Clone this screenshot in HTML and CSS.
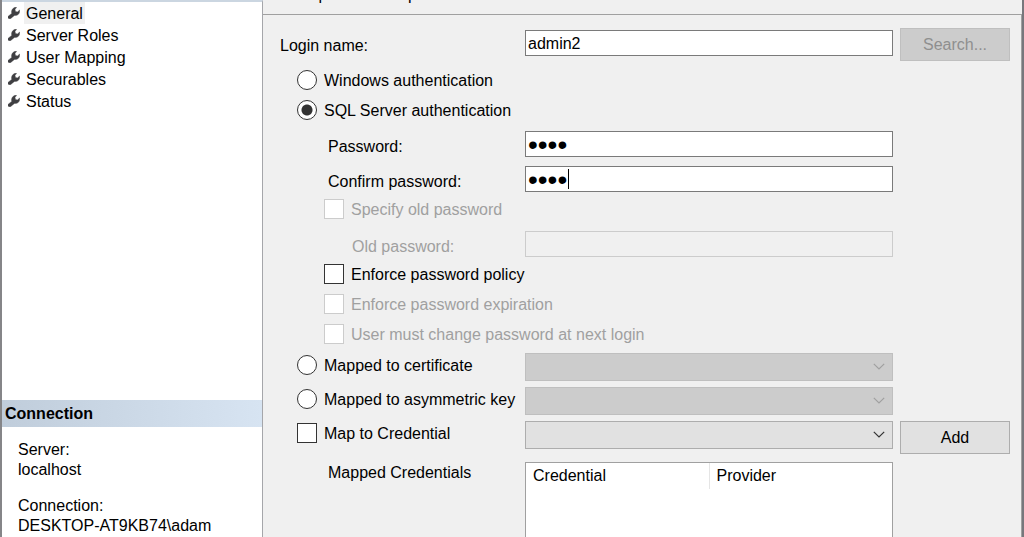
FILE: index.html
```html
<!DOCTYPE html>
<html lang="en">
<head>
<meta charset="utf-8">
<title>Login Properties</title>
<link rel="stylesheet" href="styles.css">
</head>
<body>
<svg class="defs" aria-hidden="true">
  <symbol id="wrench" viewBox="0 0 12 12">
    <path d="M0.2 9.2 L3.7 6.4 C3 3 5 0.2 8.6 0.2 L7 2.6 L7.5 4.4 L9.4 4.9 L11.7 3 C12 6.6 9.8 8.8 6.4 8.5 L2.8 11.4 C1 12.4 -0.8 10.8 0.2 9.2Z" fill="#3f3f42" stroke="#3f3f42" stroke-width="0.4"/>
  </symbol>
  <symbol id="chevron" viewBox="0 0 12 7">
    <path d="M0.8 0.8 L6 6 L11.2 0.8" fill="none" stroke="currentColor" stroke-width="1.2"/>
  </symbol>
</svg>
<div class="window">
  <aside class="sidebar">
    <nav class="pages">
      <a class="page" href="#general"><svg class="page-icon"><use href="#wrench"/></svg><span class="page-name page-name--current">General</span></a>
      <a class="page" href="#roles"><svg class="page-icon"><use href="#wrench"/></svg><span class="page-name">Server Roles</span></a>
      <a class="page" href="#mapping"><svg class="page-icon"><use href="#wrench"/></svg><span class="page-name">User Mapping</span></a>
      <a class="page" href="#securables"><svg class="page-icon"><use href="#wrench"/></svg><span class="page-name">Securables</span></a>
      <a class="page" href="#status"><svg class="page-icon"><use href="#wrench"/></svg><span class="page-name">Status</span></a>
    </nav>
    <section class="connection">
      <h2 class="connection-title">Connection</h2>
      <dl class="connection-info">
        <div><dt>Server:</dt><dd>localhost</dd></div>
        <div><dt>Connection:</dt><dd>DESKTOP-AT9KB74\adam</dd></div>
      </dl>
    </section>
  </aside>
  <main class="main">
    <div class="toolbar"><a class="tool" href="#script">Script</a><a class="tool" href="#help">Help</a></div>
    <form class="form">
      <div class="row row--text">
        <label class="label" for="login">Login name:</label>
        <input class="input" id="login" type="text" value="admin2">
        <button class="button" type="button" disabled>Search...</button>
      </div>
      <div class="group group--auth">
        <label class="option"><input class="radio" type="radio" name="auth">Windows authentication</label>
        <label class="option"><input class="radio" type="radio" name="auth" checked>SQL Server authentication</label>
      </div>
      <div class="row row--text">
        <label class="label label--nested" for="pw">Password:</label>
        <input class="input input--secret" id="pw" type="password" value="1234">
      </div>
      <div class="row row--text">
        <label class="label label--nested" for="pw2">Confirm password:</label>
        <div class="field">
          <input class="input input--secret" id="pw2" type="password" value="1234">
          <span class="caret"></span>
        </div>
      </div>
      <div class="group group--old">
        <label class="option option--nested option--off"><input class="check" type="checkbox" disabled>Specify old password</label>
      </div>
      <div class="row row--text">
        <label class="label label--deep" for="oldpw">Old password:</label>
        <input class="input" id="oldpw" type="password" disabled>
      </div>
      <div class="group group--policy">
        <label class="option option--nested"><input class="check" type="checkbox">Enforce password policy</label>
        <label class="option option--nested option--off"><input class="check" type="checkbox" disabled>Enforce password expiration</label>
        <label class="option option--nested option--off"><input class="check" type="checkbox" disabled>User must change password at next login</label>
      </div>
      <div class="group group--mapped">
        <div class="row">
          <label class="option"><input class="radio" type="radio" name="auth">Mapped to certificate</label>
          <div class="field"><select class="select" aria-label="Certificate" disabled></select><svg class="chevron chevron--off"><use href="#chevron"/></svg></div>
        </div>
        <div class="row">
          <label class="option"><input class="radio" type="radio" name="auth">Mapped to asymmetric key</label>
          <div class="field"><select class="select" aria-label="Asymmetric key" disabled></select><svg class="chevron chevron--off"><use href="#chevron"/></svg></div>
        </div>
        <div class="row">
          <label class="option"><input class="check" type="checkbox">Map to Credential</label>
          <div class="field"><select class="select" aria-label="Credential"></select><svg class="chevron"><use href="#chevron"/></svg></div>
          <button class="button" type="button">Add</button>
        </div>
      </div>
      <div class="row row--list">
        <span class="label label--nested" id="creds">Mapped Credentials</span>
        <div class="list">
          <table class="table" aria-labelledby="creds">
            <thead><tr><th>Credential</th><th>Provider</th></tr></thead>
          </table>
        </div>
      </div>
    </form>
  </main>
</div>
</body>
</html>
```
FILE: styles.css
```css
* { box-sizing: border-box; }

body {
  margin: 0;
  background: #f0f0f0;
  color: #000;
  font: 16px/21px "Liberation Sans", Arial, sans-serif;
}

.defs { position: absolute; width: 0; height: 0; }

.window {
  display: flex;
  height: 100vh;
  overflow: hidden;
  border-left: 2px solid #858588;
  border-right: 2px solid #77777c;
}

/* Sidebar */
.sidebar {
  display: flex;
  flex-direction: column;
  flex: 0 0 261px;
  background: #fff;
  border-top: 2px solid #cbd6e1;
  border-right: 1px solid #a5a6aa;
}

.pages { flex: 1; }

.page {
  display: flex;
  align-items: center;
  gap: 4px;
  height: 22px;
  padding-left: 6px;
  color: #000;
  text-decoration: none;
}

.page-icon { width: 12px; height: 12px; }

.page-name { padding: 1px 2px 0; }
.page-name--current { background: #f0f0f0; }

.connection-title {
  margin: 0;
  padding: 3px;
  font-size: 16px;
  line-height: 21px;
  background: linear-gradient(90deg, #c0cddb, #d7e4f2);
}

.connection-info {
  display: flex;
  flex-direction: column;
  gap: 16px;
  margin: 0;
  padding: 13px 16px 1px;
  line-height: 20px;
}

.connection-info dd { margin: 0; }

/* Main panel */
.main {
  display: flex;
  flex-direction: column;
  flex: 1;
  min-width: 0;
}

.toolbar {
  display: flex;
  align-items: flex-end;
  gap: 52px;
  height: 14px;
  padding: 0 28px 9px;
  overflow: hidden;
}

.tool { color: #000; text-decoration: none; }

.form {
  display: flex;
  flex-direction: column;
  flex: 1;
  min-height: 0;
  padding: 12px 11px 0 17px;
  border-top: 1px solid #a0a0a0;
  border-right: 1px solid #a0a0a0;
}

.row {
  display: grid;
  grid-template-columns: 245px minmax(0, 1fr) 110px;
  align-items: center;
}

.row--text { padding: 3px 0 5px; }
.group + .row--text { padding-top: 4px; }
.row--text + .row--text { padding-top: 4px; }

.label { padding-top: 5px; }
.label--nested { padding-left: 48px; }
.label--deep { padding-left: 72px; color: #a0a0a0; }

.input {
  width: 100%;
  height: 26px;
  padding: 2px 2px 0;
  border: 1px solid #7a7a7a;
  border-radius: 0;
  background: #fff;
  color: #000;
  font: inherit;
  outline: none;
}

.row .input,
.field { width: calc(100% - 7px); }
.field .input { width: 100%; }

.input--secret { font-size: 28px; }

.input:disabled {
  border-color: #ccc;
  background: #f0f0f0;
}

.field { position: relative; display: flex; }

.caret {
  position: absolute;
  top: 3px;
  left: 43px;
  width: 1px;
  height: 20px;
  background: #000;
}

.button {
  align-self: end;
  height: 33px;
  margin: -2px 0 -5px;
  padding: 0;
  border: 1px solid #adadad;
  border-radius: 0;
  background: #e1e1e1;
  color: #000;
  font: inherit;
}

.button:disabled {
  border-color: #bfbfbf;
  background: #ccc;
  color: #8f8f8f;
}

.group { display: flex; flex-direction: column; gap: 6px; }
.group--auth { padding: 7px 0 5px; }
.group--old { padding-bottom: 6px; }
.group--mapped { padding: 7px 0 13px; }

.option {
  display: flex;
  align-items: center;
  gap: 7px;
  height: 24px;
  padding-left: 17px;
}

.row .option { margin-bottom: 4px; }
.option--nested { padding-left: 44px; }
.option--off { color: #a0a0a0; }

.radio,
.check {
  appearance: none;
  flex: none;
  width: 20px;
  height: 20px;
  margin: 0;
  border: 1px solid #333;
  background: #fff;
}

.radio { border-radius: 50%; }
.radio:checked { background: radial-gradient(circle, #333 5px, #fff 6px); }
.check:disabled { border-color: #ccc; }

.select {
  appearance: none;
  width: 100%;
  height: 28px;
  border: 1px solid #adadad;
  border-radius: 0;
  background: #e1e1e1;
  font: inherit;
}

.select:disabled { border-color: #bfbfbf; background: #ccc; opacity: 1; }

.chevron {
  position: absolute;
  top: 10px;
  right: 8px;
  width: 12px;
  height: 7px;
  color: #333;
  pointer-events: none;
}

.chevron--off { color: #a0a0a0; }

.row--list { flex: 1; align-items: stretch; }
.row--list .label { padding-top: 0; }

.list {
  margin-right: 7px;
  border: 1px solid #a0a0a0;
  border-bottom: 0;
  background: #fff;
}

.table { width: 100%; border-collapse: collapse; table-layout: fixed; }

.table th {
  height: 26px;
  padding: 0 7px;
  font-weight: normal;
  line-height: 20px;
  text-align: left;
}

.table th:first-child { width: 50%; border-right: 1px solid #e5e5e5; }
```
